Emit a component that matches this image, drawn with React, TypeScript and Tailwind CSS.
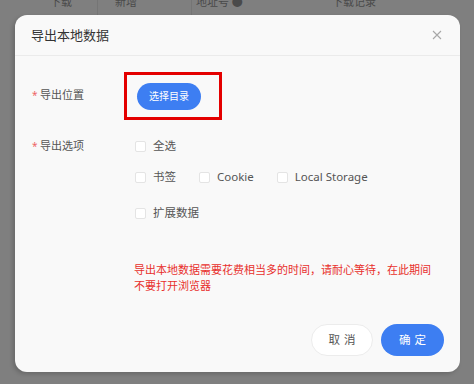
import React from "react";

const Box = () => (
  <span className="inline-block w-[11px] h-[11px] rounded-[2px] border border-[#e4e4e4] bg-white shrink-0" />
);

const Check = ({ label }: { label: string }) => (
  <label className="flex items-center gap-[7px] text-[11.5px] text-[#555]">
    <Box />
    <span>{label}</span>
  </label>
);

export default function App() {
  return (
    <div
      className="relative w-[474px] h-[384px] overflow-hidden bg-[#7f7f7f]"
      style={{ fontFamily: '"Noto Sans", "Noto Sans CJK SC", sans-serif' }}
    >
      {/* background page, dimmed */}
      <div className="flex h-[15px] text-[11px] text-[#4a4a4a] leading-none">
        <div className="w-[98px] border-r border-[#757575] pl-[50px] -mt-[4px]">下载</div>
        <div className="w-[94px] border-r border-[#757575] pl-[17px] -mt-[4px]">新增</div>
        <div className="w-[140px] pl-[4px] -mt-[4px]">地址号 ●</div>
        <div className="-mt-[4px]">下载记录</div>
      </div>

      <div className="absolute left-[15px] top-[15px] w-[445px] h-[357px] rounded-[12px] bg-[#f9f9f9] shadow-[-2px_2px_4px_rgba(0,0,0,0.18)] flex flex-col">
        <div className="h-[41px] flex items-center justify-between pl-[16px] pr-[18px] border-b border-[#ebebeb]">
          <span className="text-[13px] text-[#333] pt-[2px]">导出本地数据</span>
          <svg width="10" height="10" viewBox="0 0 10 10" className="mt-[-1px]">
            <path d="M1 1L9 9M9 1L1 9" stroke="#a8a8a8" strokeWidth="1.1" />
          </svg>
        </div>

        <div className="flex flex-col pt-[26px] pl-[17px] pr-[16px] flex-1">
          <div className="flex items-center h-[27px]">
            <div className="w-[103px] flex items-center text-[11px] text-[#555]">
              <span className="text-[#e66] text-[10px] w-[8px]">*</span>
              <span>导出位置</span>
            </div>
            <div className="relative ml-[2px]">
              <button className="w-[64px] h-[27px] rounded-full bg-[#3d7ef2] text-white text-[10px]">
                选择目录
              </button>
              <div className="absolute left-[-13px] top-[-10px] w-[98px] h-[48px] border-[3px] border-[#e40000]" />
            </div>
          </div>

          <div className="flex items-center h-[20px] mt-[27px]">
            <div className="w-[103px] flex items-center text-[11px] text-[#555]">
              <span className="text-[#e66] text-[10px] w-[8px]">*</span>
              <span>导出选项</span>
            </div>
            <Check label="全选" />
          </div>

          <div className="flex items-center h-[20px] mt-[11px] pl-[103px] gap-[23px]">
            <Check label="书签" />
            <Check label="Cookie" />
            <Check label="Local Storage" />
          </div>

          <div className="flex items-center h-[20px] mt-[16px] pl-[103px]">
            <Check label="扩展数据" />
          </div>

          <div className="mt-[39px] pl-[102px] text-[11px] leading-[16px] text-[#e8302c]">
            导出本地数据需要花费相当多的时间，请耐心等待，在此期间
            <br />
            不要打开浏览器
          </div>

          <div className="mt-auto mb-[16px] flex justify-end gap-[8px]">
            <button className="w-[62px] h-[32px] rounded-full bg-white border border-[#ececec] text-[11.5px] text-[#555] tracking-[4px] pl-[4px]">
              取消
            </button>
            <button className="w-[63px] h-[32px] rounded-full bg-[#3d7ef2] text-[11.5px] text-white tracking-[4px] pl-[4px]">
              确定
            </button>
          </div>
        </div>
      </div>
    </div>
  );
}
